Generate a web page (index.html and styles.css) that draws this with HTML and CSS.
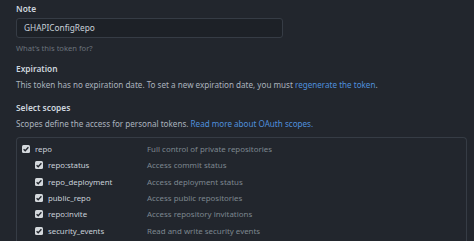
FILE: index.html
```html
<!DOCTYPE html>
<html lang="en">
<head>
<meta charset="UTF-8" />
<meta name="viewport" content="width=device-width, initial-scale=1" />
<title>Token settings</title>
<link rel="stylesheet" href="styles.css">
</head>
<body>
<div class="form">
  <div class="field-label first">Note</div>
  <div class="text-input">GHAPIConfigRepo</div>
  <div class="hint">What’s this token for?</div>

  <div class="field-label expiration">Expiration</div>
  <p class="note">This token has no expiration date. To set a new expiration date, you must <a href="#">regenerate the token</a>.</p>

  <div class="field-label scopes-title">Select scopes</div>
  <p class="note">Scopes define the access for personal tokens. <a href="#">Read more about OAuth scopes.</a></p>

  <div class="scope-box">
    <div class="scope-row parent">
      <label class="scope-name"><span class="check"><svg viewBox="0 0 8 8"><path d="M1.6 4.2 L3.2 5.8 L6.4 2.2" /></svg></span>repo</label>
      <span class="scope-desc">Full control of private repositories</span>
    </div>
    <div class="scope-row child">
      <label class="scope-name"><span class="check"><svg viewBox="0 0 8 8"><path d="M1.6 4.2 L3.2 5.8 L6.4 2.2" /></svg></span>repo:status</label>
      <span class="scope-desc">Access commit status</span>
    </div>
    <div class="scope-row child">
      <label class="scope-name"><span class="check"><svg viewBox="0 0 8 8"><path d="M1.6 4.2 L3.2 5.8 L6.4 2.2" /></svg></span>repo_deployment</label>
      <span class="scope-desc">Access deployment status</span>
    </div>
    <div class="scope-row child">
      <label class="scope-name"><span class="check"><svg viewBox="0 0 8 8"><path d="M1.6 4.2 L3.2 5.8 L6.4 2.2" /></svg></span>public_repo</label>
      <span class="scope-desc">Access public repositories</span>
    </div>
    <div class="scope-row child">
      <label class="scope-name"><span class="check"><svg viewBox="0 0 8 8"><path d="M1.6 4.2 L3.2 5.8 L6.4 2.2" /></svg></span>repo:invite</label>
      <span class="scope-desc">Access repository invitations</span>
    </div>
    <div class="scope-row child">
      <label class="scope-name"><span class="check"><svg viewBox="0 0 8 8"><path d="M1.6 4.2 L3.2 5.8 L6.4 2.2" /></svg></span>security_events</label>
      <span class="scope-desc">Read and write security events</span>
    </div>
  </div>
</div>
</body>
</html>
```

FILE: styles.css
```css
body, html {
  margin: 0; padding: 0; height: 100%;
  background: #22262d; color: #c9d1d9;
  font-family: "Noto Sans", "Open Sans", sans-serif;
  overflow: hidden;
}
.form {
  padding: 0 7px 0 16px;
}
.field-label {
  font-size: 8.4px; font-weight: 600; line-height: 14px; color: #cdd5de;
}
.field-label.first { padding-top: 2px; }
.field-label.expiration { margin-top: 7px; }
.field-label.scopes-title { margin-top: 9px; }
.text-input {
  margin-top: 2px; width: 267px; height: 20px; box-sizing: border-box;
  border: 1px solid #363c45; border-radius: 3px; background: #1d2127;
  padding-left: 7px; font-size: 8.3px; line-height: 18px; color: #c9d1d9;
}
.hint {
  margin-top: 3px; font-size: 7.6px; line-height: 14px; color: #6b737c;
}
.note {
  margin: 2px 0 0; font-size: 8.1px; line-height: 14px; color: #aab3bd;
}
.note a {
  color: #4f8fdc; text-decoration: none;
}
.scope-box {
  margin-top: 6px; border: 1px solid #363c45; border-bottom: none;
  border-radius: 4px 4px 0 0; padding: 3px 0 0 5px; height: 110px;
}
.scope-row {
  display: grid; grid-template-columns: 125px 1fr; align-items: center;
  height: 16.3px; font-size: 7.8px;
}
.scope-name {
  display: flex; align-items: center; gap: 5px; color: #c9d1d9;
}
.scope-row.child .scope-name { padding-left: 13px; }
.scope-desc { color: #7d868f; font-size: 7.9px; }
.check {
  width: 8px; height: 8px; border-radius: 1.5px; background: #d4d8dc;
  display: inline-flex; flex: none;
}
.check svg {
  width: 8px; height: 8px; fill: none; stroke: #22262d; stroke-width: 1.3;
}
```
